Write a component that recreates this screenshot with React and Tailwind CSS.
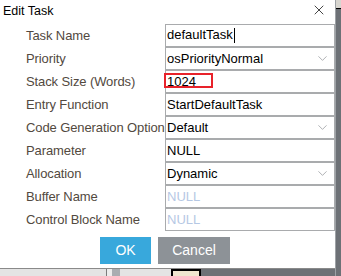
import { X, ChevronDown } from 'lucide-react';

const fields = [
  { label: 'Task Name', value: 'defaultTask', caret: true },
  { label: 'Priority', value: 'osPriorityNormal', select: true },
  { label: 'Stack Size (Words)', value: '1024' },
  { label: 'Entry Function', value: 'StartDefaultTask' },
  { label: 'Code Generation Option', value: 'Default', select: true },
  { label: 'Parameter', value: 'NULL' },
  { label: 'Allocation', value: 'Dynamic', select: true },
  { label: 'Buffer Name', value: 'NULL', muted: true },
  { label: 'Control Block Name', value: 'NULL', muted: true },
];

const FieldRow = ({ field }) => (
  <div className="flex h-[23px]">
    <div className="w-[165px] shrink-0 pl-[26px] flex items-center text-[13px] tracking-[-0.1px] text-[#524940] whitespace-nowrap">
      {field.label}
    </div>
    <div className="w-[170px] h-[23px] border border-[#a9abad] bg-white flex items-center pl-[1px] pr-[4px]">
      <span className={`flex-1 text-[13px] leading-none ${field.muted ? 'text-[#b6c8e4]' : 'text-black'}`}>
        {field.value}
        {field.caret && <span className="inline-block w-px h-[15px] bg-black align-middle ml-px -mt-[2px]"></span>}
      </span>
      {field.select && <ChevronDown size={15} strokeWidth={1} className="text-[#7f8286]" />}
    </div>
  </div>
);

export default function App() {
  return (
    <div className="w-[341px] h-[276px] flex bg-[#6d7176] overflow-hidden" style={{ fontFamily: '"Liberation Sans", Arial, sans-serif' }}>
      <div className="w-[335px] flex flex-col">
        <div className="relative h-[269px] bg-white border-b border-[#8a8a8a]">
          <div className="h-[24px] flex items-start justify-between pl-[3px] pr-[8px] pt-[2px]">
            <span className="text-[12.5px] text-black">Edit Task</span>
            <X size={16} strokeWidth={1.1} className="text-black" />
          </div>
          <div className="flex flex-col">
            {fields.map((f) => (
              <FieldRow key={f.label} field={f} />
            ))}
          </div>
          <div className="flex gap-[7px] pl-[100px] pt-[6px]">
            <div className="w-[51px] h-[27px] bg-[#38a8dc] text-white text-[14px] flex items-center justify-center">OK</div>
            <div className="w-[72px] h-[27px] bg-[#8d9297] text-white text-[14px] flex items-center justify-center">Cancel</div>
          </div>
          {/* red annotation box */}
          <div className="absolute left-[164px] top-[73px] w-[49px] h-[15px] border-2 border-[#e8222a]"></div>
        </div>
        <div className="h-[7px] flex">
          <div className="w-[106px] bg-[#e4e4e4]"></div>
          <div className="w-px bg-[#7c7c7c]"></div>
          <div className="w-[5px] bg-[#ececec]"></div>
          <div className="w-[8px] bg-[#a9adb1]"></div>
          <div className="w-[51px] bg-[#e4e4e4]"></div>
          <div className="w-[30px] bg-[#efe6cf] border-x-2 border-t-2 border-black"></div>
        </div>
      </div>
      <div className="w-[6px] flex flex-col border-l border-[#9ea2a6]">
        <div className="h-[9px] bg-[#d8d6d0] border-b border-black"></div>
      </div>
    </div>
  );
}
